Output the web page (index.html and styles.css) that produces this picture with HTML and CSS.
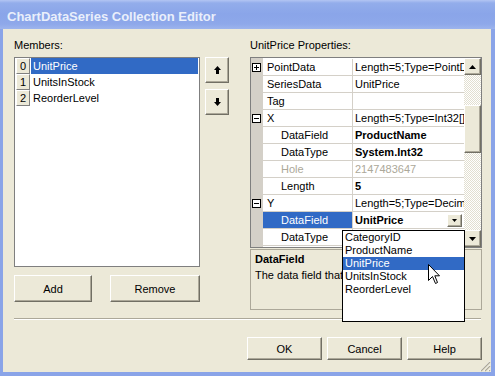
FILE: index.html
```html
<!DOCTYPE html>
<html>
<head>
<meta charset="utf-8">
<link rel="stylesheet" href="styles.css">
</head>
<body>
<div class="window">
  <div class="titlebar"><span class="title">ChartDataSeries Collection Editor</span></div>
  <div class="client">
    <div class="main">
      <div class="leftcol">
        <div class="label">Members:</div>
        <div class="members">
          <div class="listbox">
            <div class="mrow"><span class="idx">0</span><span class="mtext sel">UnitPrice</span></div>
            <div class="mrow"><span class="idx">1</span><span class="mtext">UnitsInStock</span></div>
            <div class="mrow"><span class="idx">2</span><span class="mtext">ReorderLevel</span></div>
          </div>
          <div class="movebtns">
            <div class="btn movebtn"><svg width="7" height="8" viewBox="0 0 7 8"><path d="M3.5 0L7 4H5V8H2V4H0Z" fill="#000"/></svg></div>
            <div class="btn movebtn"><svg width="7" height="8" viewBox="0 0 7 8"><path d="M3.5 8L7 4H5V0H2V4H0Z" fill="#000"/></svg></div>
          </div>
        </div>
        <div class="addrow">
          <div class="btn addbtn">Add</div>
          <div class="btn removebtn">Remove</div>
        </div>
      </div>
      <div class="rightcol">
        <div class="label">UnitPrice Properties:</div>
        <div class="propgrid">
          <div class="pg-rows">
            <div class="pg-row"><span class="gut"><svg width="9" height="9" viewBox="0 0 9 9"><rect x=".5" y=".5" width="8" height="8" fill="#fff" stroke="#000"/><path d="M2 4.5H7M4.5 2V7" stroke="#000"/></svg></span><span class="name">PointData</span><span class="val">Length=5;Type=PointData[]</span></div>
            <div class="pg-row"><span class="gut"></span><span class="name">SeriesData</span><span class="val">UnitPrice</span></div>
            <div class="pg-row"><span class="gut"></span><span class="name">Tag</span><span class="val"></span></div>
            <div class="pg-row"><span class="gut"><svg width="9" height="9" viewBox="0 0 9 9"><rect x=".5" y=".5" width="8" height="8" fill="#fff" stroke="#000"/><path d="M2 4.5H7" stroke="#000"/></svg></span><span class="name">X</span><span class="val">Length=5;Type=Int32[]</span></div>
            <div class="pg-row"><span class="gut"></span><span class="name child">DataField</span><span class="val bold">ProductName</span></div>
            <div class="pg-row"><span class="gut"></span><span class="name child">DataType</span><span class="val bold">System.Int32</span></div>
            <div class="pg-row"><span class="gut"></span><span class="name child dim">Hole</span><span class="val dim">2147483647</span></div>
            <div class="pg-row"><span class="gut"></span><span class="name child">Length</span><span class="val bold">5</span></div>
            <div class="pg-row"><span class="gut"><svg width="9" height="9" viewBox="0 0 9 9"><rect x=".5" y=".5" width="8" height="8" fill="#fff" stroke="#000"/><path d="M2 4.5H7" stroke="#000"/></svg></span><span class="name">Y</span><span class="val">Length=5;Type=Decimal[]</span></div>
            <div class="pg-row"><span class="gut"></span><span class="name child selname">DataField</span><span class="val bold editval"><span class="valtext">UnitPrice</span><span class="btn ddbtn"><svg width="5" height="3" viewBox="0 0 5 3"><path d="M0 0H5L2.5 3Z" fill="#000"/></svg></span></span></div>
            <div class="pg-row"><span class="gut"></span><span class="name child">DataType</span><span class="val bold"></span></div>
          </div>
          <div class="vscroll">
            <div class="btn sbtn"><svg width="7" height="4" viewBox="0 0 7 4"><path d="M3.5 0L7 4H0Z" fill="#000"/></svg></div>
            <div class="btn thumb"></div>
            <div class="sfill"></div>
            <div class="btn sbtn"><svg width="7" height="4" viewBox="0 0 7 4"><path d="M0 0H7L3.5 4Z" fill="#000"/></svg></div>
          </div>
        </div>
        <div class="desc">
          <div class="desc-title">DataField</div>
          <div class="desc-text">The data field that</div>
        </div>
      </div>
    </div>
    <div class="sep"></div>
    <div class="footer">
      <div class="btn fbtn">OK</div>
      <div class="btn fbtn">Cancel</div>
      <div class="btn fbtn">Help</div>
    </div>
    <svg class="grip" width="12" height="12" viewBox="0 0 12 12">
      <path d="M11 1L1 11M11 5L5 11M11 9L9 11" stroke="#fff" stroke-width="1"/>
      <path d="M11 2L2 11M11 6L6 11M11 10L10 11" stroke="#aca899" stroke-width="1.2"/>
    </svg>
  </div>
  <div class="popup">
    <div class="pitem">CategoryID</div>
    <div class="pitem">ProductName</div>
    <div class="pitem psel">UnitPrice</div>
    <div class="pitem">UnitsInStock</div>
    <div class="pitem">ReorderLevel</div>
  </div>
  <svg class="cursor" width="13" height="21" viewBox="0 0 13 21"><path d="M0.5 0.5V16.5L4.5 12.5L7.5 19.5L9.5 18.5L6.8 11.8H11.5Z" fill="#fff" stroke="#000" stroke-width="1" stroke-linejoin="miter"/></svg>
</div>
</body>
</html>
```
FILE: styles.css
```css
* { box-sizing: border-box; }
body {
  margin: 0;
  background: #ffffff;
  font-family: "Liberation Sans", Arial, sans-serif;
  font-size: 11px;
  color: #000;
}
.window {
  position: relative;
  width: 495px;
  height: 376px;
  display: flex;
  flex-direction: column;
  background: #8aa4e8;
  overflow: hidden;
}
.titlebar {
  flex: none;
  height: 29px;
  padding: 3px 0 0 7px;
  display: flex;
  align-items: center;
  background: linear-gradient(to bottom, #b3c5f3 0px, #93adeb 3px, #8aa5e9 14px, #8ea8ea 24px, #9db4ed 29px);
  color: #e9effb;
  font-weight: bold;
  font-size: 13px;
  white-space: nowrap;
}
.client {
  position: relative;
  flex: 1;
  margin: 0 4px 4px 3px;
  background: #ece9d8;
  display: flex;
  flex-direction: column;
}
.main {
  display: flex;
  gap: 21px;
  height: 272px;
  margin: 9px 9px 0 11px;
}
.label {
  height: 14px;
  line-height: 14px;
  margin-bottom: 5px;
  white-space: nowrap;
}
.leftcol {
  width: 215px;
  flex: none;
  display: flex;
  flex-direction: column;
}
.members {
  display: flex;
  gap: 5px;
  height: 210px;
}
.listbox {
  width: 186px;
  background: #fff;
  border: 1px solid #7f7f7f;
  padding: 0 1px 0 1px;
}
.mrow {
  display: flex;
  height: 16px;
}
.idx {
  width: 14px;
  height: 16px;
  margin-right: 1px;
  background: #ece9d8;
  border: 1px solid;
  border-color: #fff #808080 #808080 #fff;
  text-align: center;
  line-height: 14px;
}
.mtext {
  flex: 1;
  padding-left: 2px;
  line-height: 16px;
}
.mtext.sel {
  background: #316ac5;
  color: #fff;
}
.btn {
  background: #ece9d8;
  border: 1px solid;
  border-color: #fff #716f64 #716f64 #fff;
  box-shadow: inset -1px -1px #aca899;
  display: flex;
  align-items: center;
  justify-content: center;
}
.movebtns {
  display: flex;
  flex-direction: column;
  gap: 6px;
}
.movebtn {
  width: 24px;
  height: 26px;
}
.addrow {
  display: flex;
  gap: 18px;
  margin-top: 8px;
}
.addbtn { width: 78px; height: 27px; }
.removebtn { width: 90px; height: 27px; }
.rightcol {
  width: 232px;
  flex: none;
  display: flex;
  flex-direction: column;
}
.propgrid {
  height: 191px;
  border: 1px solid #7f7f7f;
  background: #fff;
  display: flex;
  overflow: hidden;
}
.pg-rows {
  flex: 1;
  min-width: 0;
  overflow: hidden;
  padding-top: 1px;
  background: linear-gradient(to right, #d4d0c8 12px, #fff 12px);
}
.pg-row {
  display: flex;
  height: 17px;
  min-width: 0;
  border-bottom: 1px solid #d4d0c8;
}
.gut {
  width: 12px;
  flex: none;
  background: #d4d0c8;
  display: flex;
  align-items: center;
  padding-left: 1px;
}
.gut svg { display: block; }
.name {
  width: 89px;
  flex: none;
  padding-left: 4px;
  line-height: 16px;
  white-space: nowrap;
  overflow: hidden;
}
.name.child { padding-left: 18px; }
.name.selname {
  background: #316ac5;
  color: #fff;
}
.val {
  flex: 1;
  min-width: 0;
  border-left: 1px solid #d4d0c8;
  padding-left: 2px;
  line-height: 16px;
  white-space: nowrap;
  overflow: hidden;
}
.bold { font-weight: bold; }
.dim { color: #aca899; }
.editval {
  display: flex;
  align-items: flex-start;
}
.valtext { flex: 1; }
.ddbtn {
  width: 15px;
  height: 13px;
  margin: 2px 2px 0 0;
  flex: none;
}
.vscroll {
  width: 17px;
  flex: none;
  display: flex;
  flex-direction: column;
  background: repeating-conic-gradient(#ffffff 0 25%, #e2dfd0 0 50%) 0 0 / 2px 2px;
}
.sbtn {
  width: 17px;
  height: 17px;
  flex: none;
}
.thumb {
  margin-top: 30px;
  height: 48px;
  flex: none;
}
.sfill { flex: 1; }
.desc {
  margin-top: 1px;
  height: 61px;
  border: 1px solid #aca899;
  padding: 2px 4px;
  white-space: nowrap;
  overflow: hidden;
}
.desc-title {
  font-weight: bold;
  line-height: 14px;
}
.desc-text {
  margin-top: 2px;
  line-height: 14px;
}
.sep {
  height: 2px;
  margin: 8px 10px 0 11px;
  border-top: 1px solid #aca899;
  border-bottom: 1px solid #fff;
}
.footer {
  display: flex;
  justify-content: flex-end;
  gap: 5px;
  margin: 17px 9px 0 0;
}
.fbtn {
  width: 75px;
  height: 23px;
}
.grip {
  position: absolute;
  right: 0;
  bottom: 0;
}
.popup {
  position: absolute;
  left: 342px;
  top: 230px;
  width: 123px;
  height: 92px;
  background: #fff;
  border: 1px solid #000;
}
.pitem {
  height: 13px;
  line-height: 13px;
  padding-left: 2px;
  white-space: nowrap;
}
.pitem.psel {
  background: #316ac5;
  color: #fff;
}
.cursor {
  position: absolute;
  left: 428px;
  top: 264px;
}
```
